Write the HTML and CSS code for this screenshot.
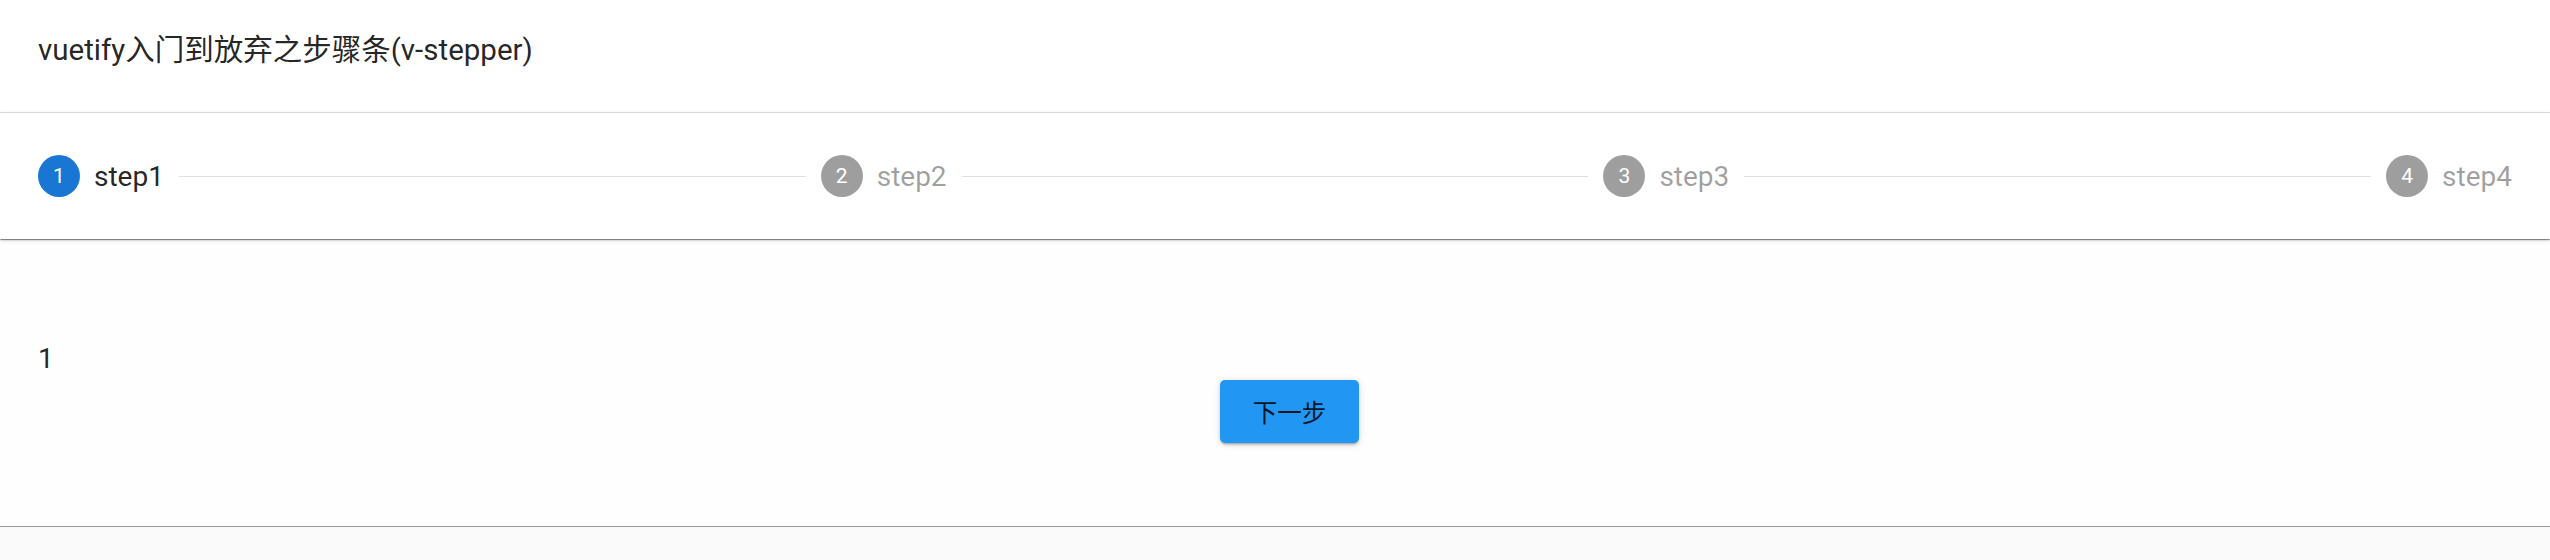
FILE: index.html
```html
<!DOCTYPE html>
<html lang="zh-CN">
<head>
    <meta charset="UTF-8">
    <meta name="viewport" content="width=device-width, initial-scale=1.0">
    <title>v-stepper</title>
    <link rel="stylesheet" href="styles.css">
</head>
<body>
    <div class="div-titulo">
        <h1>vuetify入门到放弃之步骤条(v-stepper)</h1>
    </div>

    <div class="stepper">
        <div class="stepper-header">
            <div class="step step-activo">
                <span class="step-circulo">1</span>
                <span class="step-label">step1</span>
            </div>
            <div class="divider"></div>
            <div class="step">
                <span class="step-circulo">2</span>
                <span class="step-label">step2</span>
            </div>
            <div class="divider"></div>
            <div class="step">
                <span class="step-circulo">3</span>
                <span class="step-label">step3</span>
            </div>
            <div class="divider"></div>
            <div class="step">
                <span class="step-circulo">4</span>
                <span class="step-label">step4</span>
            </div>
        </div>

        <div class="stepper-content">
            <p class="contenido">1</p>
            <div class="acciones">
                <button class="btn btn-siguiente">下一步</button>
            </div>
        </div>
    </div>
</body>
</html>
```

FILE: styles.css
```css
*{
    margin: 0;
    padding: 0;
    box-sizing: border-box;
}
body{
    background-color: #fafafa;
    font-family: Roboto, "Noto Sans CJK SC", sans-serif;
    color: rgba(0, 0, 0, 0.87);
}
.div-titulo{
    width: 100%;
    height: 112px;
    display: flex;
    align-items: center;
    padding: 0 38px 13px;
    background-color: #fff;
}
.div-titulo h1{
    font-weight: 400;
    font-size: 29.5px;
    line-height: 34px;
}
/* stepper */
.stepper{
    background-color: #fefefe;
    border-top: 1px solid #dcdcdc;
    border-bottom: 1px solid #9a9a9a;
    box-shadow: 0 2px 2px 0 rgba(0, 0, 0, 0.14), 0 2px 5px 0 rgba(0, 0, 0, 0.1);
}
.stepper-header{
    height: 126px;
    display: flex;
    align-items: center;
    background-color: #fff;
    box-shadow: 0 2px 1px -1px rgba(0, 0, 0, 0.3), 0 1px 1px 0 rgba(0, 0, 0, 0.2), 0 2px 4px 0 rgba(0, 0, 0, 0.1);
}
.step{
    display: flex;
    align-items: center;
    padding: 0 38px;
}
.step-circulo{
    width: 42px;
    height: 42px;
    border-radius: 50%;
    background-color: #9e9e9e;
    color: #fff;
    font-size: 21px;
    display: flex;
    justify-content: center;
    align-items: center;
    margin-right: 14px;
}
.step-label{
    font-size: 28px;
    line-height: 33px;
    color: rgba(0, 0, 0, 0.38);
}
.step-activo .step-circulo{
    background-color: #1976d2;
}
.step-activo .step-label{
    color: rgba(0, 0, 0, 0.87);
}
.divider{
    flex: 1 1 0;
    height: 1px;
    margin: 0 -23px;
    background-color: rgba(0, 0, 0, 0.12);
}
.stepper-content{
    padding: 99px 38px 83px;
}
.contenido{
    font-size: 28px;
    line-height: 42px;
}
.acciones{
    display: flex;
    justify-content: center;
    padding-left: 29px;
}
.btn{
    border: none;
    border-radius: 5px;
    font-family: "Noto Sans CJK SC", sans-serif;
    color: rgba(0, 0, 0, 0.87);
}
.btn-siguiente{
    width: 139px;
    height: 63px;
    font-size: 24.5px;
    background-color: #2196f3;
    box-shadow: 0 3px 2px -2px rgba(0, 0, 0, 0.2), 0 2px 3px 0 rgba(0, 0, 0, 0.14), 0 1px 8px 0 rgba(0, 0, 0, 0.12);
}
```
